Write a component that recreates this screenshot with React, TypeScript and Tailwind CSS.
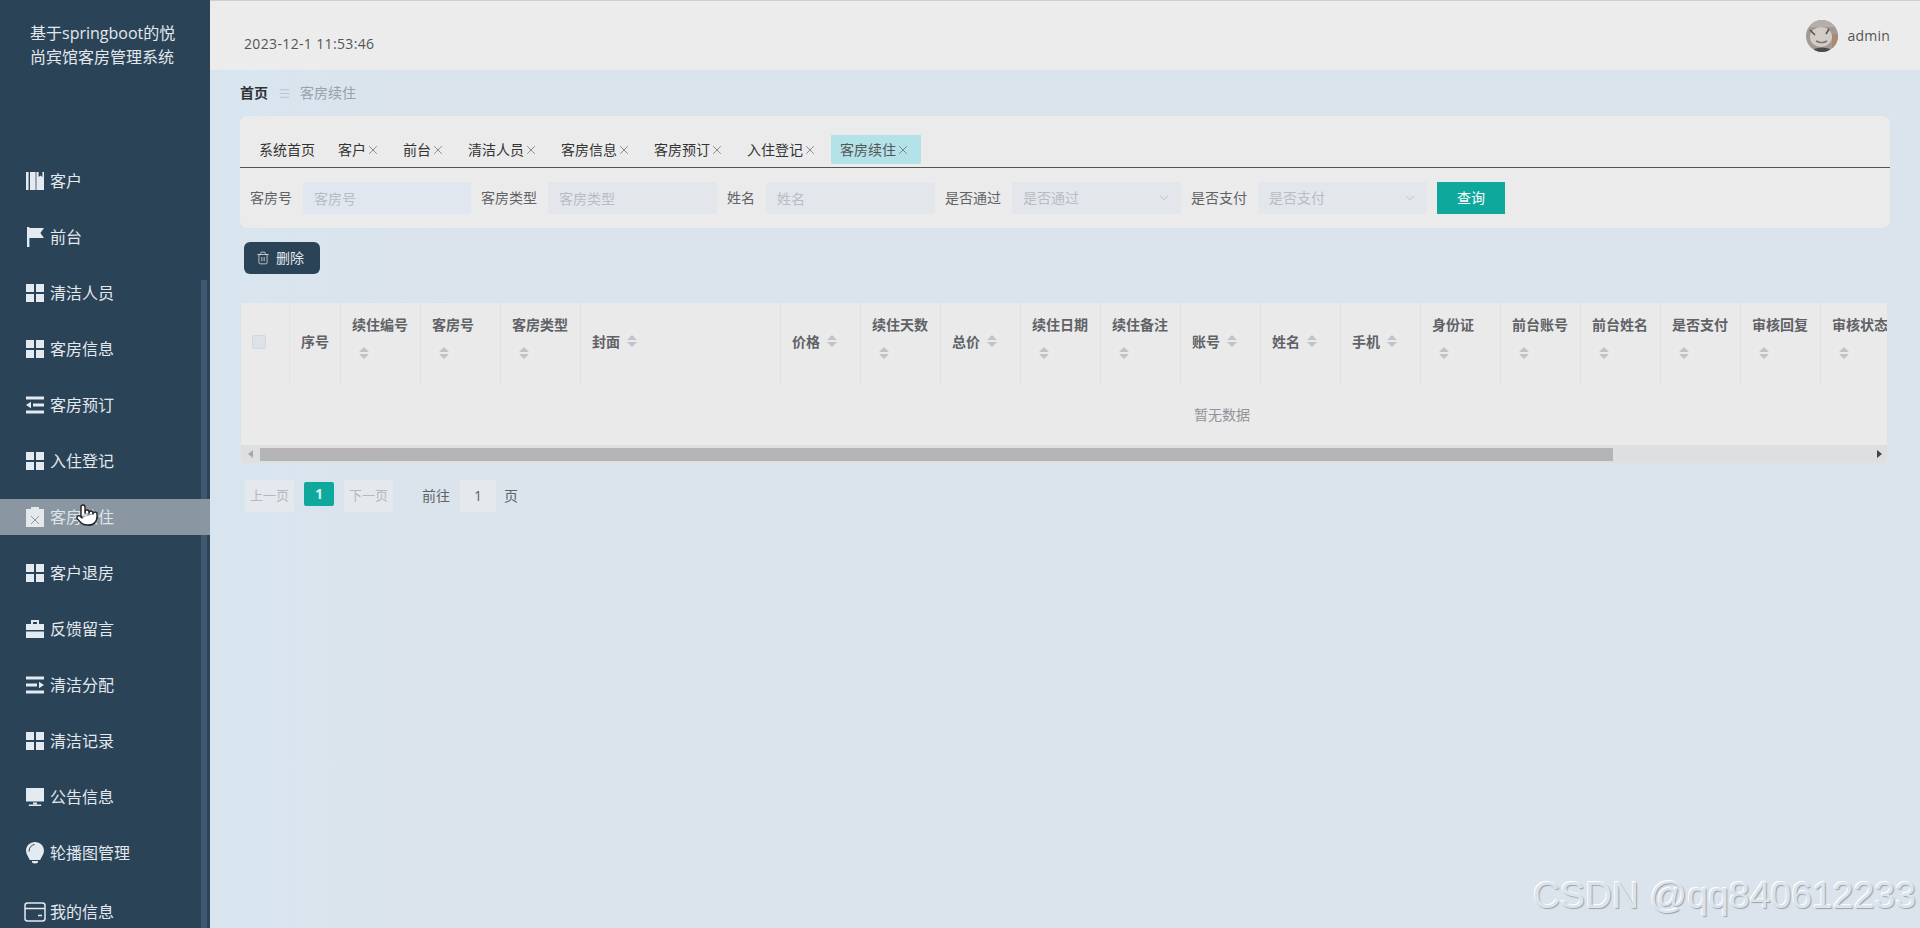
import { ChevronDown, Menu, Pointer, Trash2, X } from 'lucide-react'
import type { ReactNode } from 'react'

const iconFill = '#e4eaf2'

function MenuIcon({ name }: { name: string }) {
  if (name === 'wallet') {
    return (
      <svg width="22" height="20" viewBox="0 0 22 20" fill="none" stroke={iconFill} strokeWidth="1.5" className="-ml-[2px] mr-[4px] shrink-0">
        <rect x="1" y="1" width="20" height="18" rx="2.5" />
        <path d="M1 6.500h20M14 13.500h4" />
      </svg>
    )
  }
  if (name === 'bulb') {
    return (
      <svg width="18" height="22" viewBox="0 0 18 22" fill={iconFill} className="mr-[6px] shrink-0">
        <path d="M9 0c5 0 9 3.800 9 8.700 0 3.600-2.600 5.800-3.800 9.300H3.800C2.600 14.500 0 12.300 0 8.700 0 3.800 4 0 9 0zM6 19h6v1.500q-3 2-6 0z" />
        <path d="M3 9.500C3 5.500 5.500 3 8.500 2.500" stroke="#2a4357" strokeWidth="1" fill="none" />
      </svg>
    )
  }
  if (name === 'release') {
    return (
      <svg width="18" height="20" viewBox="0 0 18 20" fill="#e6e9ec" className="mr-[6px] shrink-0">
        <path d="M0 2h5V0h8v2h5v18H0z" />
        <path d="M5 9l8 8M13 9l-8 8" stroke="#8b98a3" strokeWidth="1" fill="none" />
      </svg>
    )
  }
  if (name === 'flag') {
    return (
      <svg width="18" height="20" viewBox="0 0 18 20" fill={iconFill} className="mr-[6px] shrink-0">
        <path d="M1 0h2.400v20H1zM3.400 1H18l-3.600 5 3.600 5H3.400z" />
      </svg>
    )
  }
  return (
    <svg width="18" height="18" viewBox="0 0 18 18" fill={iconFill} className="mr-[6px] shrink-0">
      {name === 'book' && <path d="M0 0h2.600v18H0zM4 0h5.600v18H4zM10.400 0h2.200v5l1.900-1.500L16.400 5V0H18v18h-7.600z" />}
      {name === 'grid' && <path d="M0 0h8v8H0zM10 0h8v8h-8zM0 10h8v8H0zM10 10h8v8h-8z" />}
      {name === 'fold' && <path d="M0 .5h18v3H0zM7 7.500h11v3H7zM0 9l5-3.200v6.400zM0 14.500h18v3H0z" />}
      {name === 'unfold' && <path d="M0 .5h18v3H0zM0 7.500h11v3H0zM18 9l-5-3.200v6.400zM0 14.500h18v3H0z" />}
      {name === 'case' && <path d="M5 4V0h8v4h5v6H0V4zM7 4h4V2H7zM0 11.500h18V18H0z" />}
      {name === 'monitor' && <path d="M0 0h18v13.600H0zM7 14.400h4v1.800H7zM2.800 16.400h12.400V18H2.800z" />}
    </svg>
  )
}

const menus = [
  ['客户', 'book'],
  ['前台', 'flag'],
  ['清洁人员', 'grid'],
  ['客房信息', 'grid'],
  ['客房预订', 'fold'],
  ['入住登记', 'grid'],
  ['客房续住', 'release'],
  ['客户退房', 'grid'],
  ['反馈留言', 'case'],
  ['清洁分配', 'unfold'],
  ['清洁记录', 'grid'],
  ['公告信息', 'monitor'],
  ['轮播图管理', 'bulb'],
  ['我的信息', 'wallet'],
]

const tabs = ['客户', '前台', '清洁人员', '客房信息', '客房预订', '入住登记']

const columns = [
  { label: '序号', w: 'w-[51px]', sort: false },
  { label: '续住编号', w: 'w-20', sort: true },
  { label: '客房号', w: 'w-20', sort: true },
  { label: '客房类型', w: 'w-20', sort: true },
  { label: '封面', w: 'w-[200px]', sort: true },
  { label: '价格', w: 'w-20', sort: true },
  { label: '续住天数', w: 'w-20', sort: true },
  { label: '总价', w: 'w-20', sort: true },
  { label: '续住日期', w: 'w-20', sort: true },
  { label: '续住备注', w: 'w-20', sort: true },
  { label: '账号', w: 'w-20', sort: true },
  { label: '姓名', w: 'w-20', sort: true },
  { label: '手机', w: 'w-20', sort: true },
  { label: '身份证', w: 'w-20', sort: true },
  { label: '前台账号', w: 'w-20', sort: true },
  { label: '前台姓名', w: 'w-20', sort: true },
  { label: '是否支付', w: 'w-20', sort: true },
  { label: '审核回复', w: 'w-20', sort: true },
  { label: '审核状态', w: 'w-20', sort: true },
]

function Caret() {
  return (
    <span className="ml-[7px] flex h-[34px] w-[10px] shrink-0 flex-col items-center justify-center gap-[2px]">
      <span className="h-0 w-0 border-x-[5px] border-b-[5px] border-x-transparent border-b-[#bfc3cb]" />
      <span className="h-0 w-0 border-x-[5px] border-t-[5px] border-x-transparent border-t-[#bfc3cb]" />
    </span>
  )
}

function Field({ label, children }: { label: string; children: ReactNode }) {
  return (
    <div className="flex items-center">
      <span className="mr-[11px] text-sm text-[#606266]">{label}</span>
      {children}
    </div>
  )
}

function Select({ text }: { text: string }) {
  return (
    <div className="flex h-8 w-[169px] items-center justify-between rounded-[2px] bg-[#e3e7ec] pl-[11px] pr-[10px] text-sm text-[#b8bcc3]">
      {text}
      <ChevronDown size={14} strokeWidth={1.5} className="text-[#b8bcc4]" />
    </div>
  )
}

export default function App() {
  return (
    <div className="relative flex h-[928px] w-[1920px] overflow-hidden bg-[#dbe3ec] font-['Open_Sans','Noto_Sans_CJK_SC',sans-serif]">
      {/* 左侧菜单 */}
      <aside className="relative w-[210px] shrink-0 bg-[#2a4357]">
        <h1 className="ml-[30px] mt-[21px] w-[150px] text-base font-normal leading-6 text-[#e3e8ee]">
          基于springboot的悦尚宾馆客房管理系统
        </h1>
        <div className="absolute bottom-0 left-[201px] top-[280px] w-[6px] bg-[#3f586f]" />
        <nav className="relative mt-[94px] flex flex-col gap-5">
          {menus.map(([label, icon]) => (
            <div
              key={label}
              className={`flex h-9 items-center pl-[26px] text-base last:mt-[3px] ${
                label === '客房续住' ? 'bg-[#8a97a2] text-[#dfe4e9]' : 'text-[#e3e8ee]'
              }`}
            >
              <MenuIcon name={icon} />
              {label}
            </div>
          ))}
        </nav>
        <Pointer size={24} strokeWidth={1.4} fill="#ffffff" className="absolute left-[75px] top-[503px] text-[#222222]" />
      </aside>

      <main className="min-w-0 flex-1 bg-gradient-to-r from-[#d8e5ef] to-[#dbe3ec] to-[15%]">
        <header className="flex h-[70px] items-center justify-between border-t border-[#cfcfcf] bg-[#ececec] pl-[34px] pr-[30px]">
          <span className="mt-4 text-sm tracking-[0.35px] text-[#555555]">2023-12-1 11:53:46</span>
          <div className="flex items-center gap-[10px]">
            <svg width="32" height="32" viewBox="0 0 32 32">
              <defs>
                <clipPath id="avatar">
                  <circle cx="16" cy="16" r="16" />
                </clipPath>
              </defs>
              <g clipPath="url(#avatar)">
                <rect width="32" height="32" fill="#a39a96" />
                <path d="M0 0h32v7H0z" fill="#b5aeaa" />
                <ellipse cx="15" cy="17" rx="11" ry="10" fill="#d2cbc6" />
                <path d="M4 10l5 5M23 9l-3 5" stroke="#55504f" strokeWidth="1.500" />
                <path d="M10 21q6 3 11 0" stroke="#7b7371" strokeWidth="1.500" fill="#ebe7e4" />
                <path d="M8 29q8-3 16 0v3H8z" fill="#4a4a4d" />
                <path d="M26 14h6v18h-6z" fill="#a98a74" />
              </g>
            </svg>
            <span className="text-sm tracking-[0.2px] text-[#555555]">admin</span>
          </div>
        </header>

        <div className="flex h-[46px] items-center pl-[30px]">
          <span className="text-sm font-bold text-[#303133]">首页</span>
          <Menu size={13} strokeWidth={1} className="ml-[10px] text-[#a0a5ad]" />
          <span className="ml-[9px] text-sm text-[#97a0ab]">客房续住</span>
        </div>

        <section className="ml-[30px] mr-[30px] h-[112px] rounded-lg bg-[#ebebec]">
          <div className="flex h-[52px] items-start border-b border-[#555555] pl-[10px] pt-[19px]">
            <div className="flex h-[29px] items-center pl-[9px] pr-[11px] text-sm text-[#333333]">系统首页</div>
            {tabs.map((tab) => (
              <div key={tab} className="ml-[3px] flex h-[29px] items-center pl-[9px] pr-[11px] text-sm text-[#333333]">
                {tab}
                <X size={14} strokeWidth={1.1} className="text-[#555555]" />
              </div>
            ))}
            <div className="ml-[3px] flex h-[29px] items-center bg-[#b3e2e9] pl-[9px] pr-[11px] text-sm text-[#555555]">
              客房续住
              <X size={14} strokeWidth={1.1} className="text-[#555555]" />
            </div>
          </div>
          <div className="flex items-center gap-[10px] pl-[10px] pt-[14px]">
            <Field label="客房号">
              <input placeholder="客房号" className="h-8 w-[168px] rounded-[2px] bg-[#e1e7ef] pl-[11px] text-sm placeholder:text-[#b8bcc3]" />
            </Field>
            <Field label="客房类型">
              <input placeholder="客房类型" className="h-8 w-[169px] rounded-[2px] bg-[#e3e7ec] pl-[11px] text-sm placeholder:text-[#b8bcc3]" />
            </Field>
            <Field label="姓名">
              <input placeholder="姓名" className="h-8 w-[169px] rounded-[2px] bg-[#e3e7ec] pl-[11px] text-sm placeholder:text-[#b8bcc3]" />
            </Field>
            <Field label="是否通过">
              <Select text="是否通过" />
            </Field>
            <Field label="是否支付">
              <Select text="是否支付" />
            </Field>
            <button className="h-8 w-[68px] bg-[#0fa89c] text-sm text-white">查询</button>
          </div>
        </section>

        <button className="ml-[34px] mt-[14px] flex h-8 w-[76px] items-center rounded-md bg-[#2a4357] pl-[12px] text-sm text-[#e4e9ee]">
          <Trash2 size={14} strokeWidth={1.3} className="mr-[6px]" />
          删除
        </button>

        {/* 数据表格 */}
        <div className="ml-[31px] mt-[29px] w-[1646px] overflow-hidden">
          <div className="flex h-[82px] bg-[#eaeaeb]">
            <div className="flex w-[49px] shrink-0 border-r border-[#e2e2e3] pl-[11px] pt-[32px]">
              <span className="h-[14px] w-[14px] rounded-[2px] border border-[#d4d7df] bg-[#dfe1e8]" />
            </div>
            {columns.map((col) => (
              <div
                key={col.label}
                className={`flex shrink-0 flex-wrap content-center items-center border-r border-[#e2e2e3] pb-[6px] pl-[11px] pr-[10px] text-sm font-bold leading-[23px] text-[#606266] ${col.w}`}
              >
                <span className="whitespace-nowrap">{col.label}</span>
                {col.sort && <Caret />}
              </div>
            ))}
          </div>
          <div className="flex h-[60px] items-center justify-center bg-[#eaeaeb] pl-[316px] text-sm text-[#909399]">暂无数据</div>
          <div className="flex h-[18px] items-center bg-[#dedfe0]">
            <span className="flex w-[19px] shrink-0 justify-center">
              <span className="h-0 w-0 border-y-4 border-r-[5px] border-y-transparent border-r-[#a8a8a8]" />
            </span>
            <span className="h-[13px] w-[1353px] bg-[#b4b4b6]" />
            <span className="ml-auto mr-[5px] h-0 w-0 border-y-4 border-l-[5px] border-y-transparent border-l-[#444444]" />
          </div>
        </div>

        <div className="ml-[35px] mt-[17px] flex h-8 items-center text-[13px]">
          <span className="flex h-8 w-[49px] items-center justify-center bg-[#e5e8ed] text-[#b4b8bf]">上一页</span>
          <span className="mb-1 ml-[10px] flex h-6 w-[30px] items-center justify-center rounded-[2px] bg-[#0fa89c] text-sm font-bold text-[#d8f3f1]">1</span>
          <span className="ml-[10px] flex h-8 w-[49px] items-center justify-center bg-[#e5e8ed] text-[#b4b8bf]">下一页</span>
          <span className="ml-[29px] text-sm text-[#606266]">前往</span>
          <span className="ml-[10px] flex h-8 w-9 items-center justify-center rounded-[2px] bg-[#e5e8ed] text-sm text-[#606266]">1</span>
          <span className="ml-2 text-sm text-[#606266]">页</span>
        </div>
      </main>

      <div className="absolute left-[1533px] top-[873px] font-['Liberation_Sans',sans-serif] text-[37.4px] leading-[44px] text-[#dbe3ec] [text-shadow:1px_1px_1px_#98a3ae,-1px_-1px_0_#ffffff]">
        CSDN @qq840612233
      </div>
    </div>
  )
}
